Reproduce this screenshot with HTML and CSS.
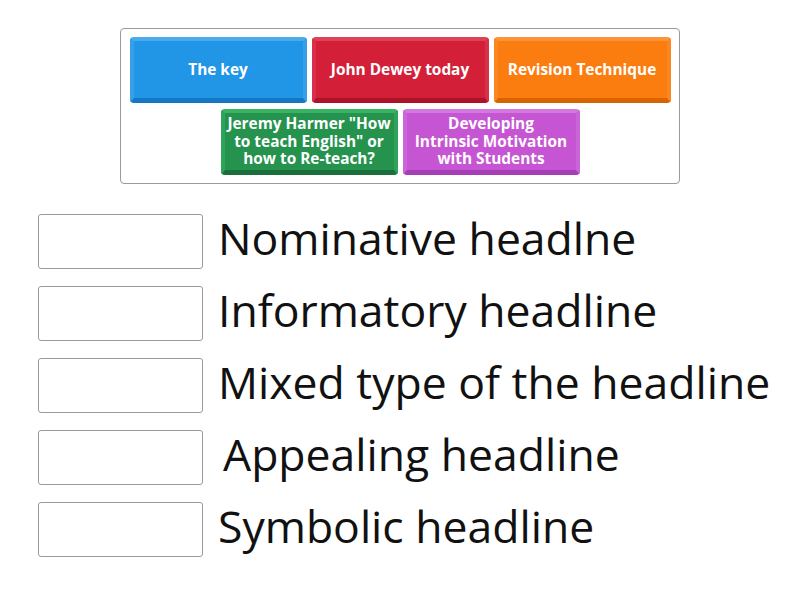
FILE: index.html
```html
<!DOCTYPE html>
<html lang="en">
<head>
    <meta charset="UTF-8">
    <title>Match up</title>
    <link rel="stylesheet" href="styles.css">
</head>
<body>
    <div class="tile-bank">
        <div class="tile blue">The key</div>
        <div class="tile red">John Dewey today</div>
        <div class="tile orange">Revision Technique</div>
        <div class="tile green">Jeremy Harmer "How to teach English" or how to Re-teach?</div>
        <div class="tile purple">Developing Intrinsic Motivation with Students</div>
    </div>

    <div class="targets">
        <div class="target-row">
            <div class="drop-box"></div>
            <div class="label">Nominative headlne</div>
        </div>
        <div class="target-row">
            <div class="drop-box"></div>
            <div class="label">Informatory headline</div>
        </div>
        <div class="target-row">
            <div class="drop-box"></div>
            <div class="label">Mixed type of the headline</div>
        </div>
        <div class="target-row">
            <div class="drop-box"></div>
            <div class="label indent">Appealing headline</div>
        </div>
        <div class="target-row">
            <div class="drop-box"></div>
            <div class="label">Symbolic headline</div>
        </div>
    </div>
</body>
</html>
```

FILE: styles.css
```css
* {
    margin: 0;
    padding: 0;
    box-sizing: border-box;
    font-family: "Open Sans", sans-serif;
}

body {
    background: #ffffff;
    color: #111;
}

.tile-bank {
    margin: 28px 0 0 120px;
    width: 560px;
    padding: 8px;
    border: 1px solid #9a9a9a;
    border-radius: 4px;
    display: flex;
    flex-wrap: wrap;
    justify-content: center;
    gap: 6px 5px;
}

.tile {
    width: 177px;
    height: 66px;
    padding: 0 1px;
    border-radius: 4px;
    border: 4px solid;
    border-bottom-width: 5px;
    display: flex;
    align-items: center;
    justify-content: center;
    text-align: center;
    text-wrap: balance;
    color: #fff;
    font-weight: bold;
    font-size: 15.4px;
    line-height: 1.14;
}

.blue {
    background: #2196e6;
    border-color: #4aabec #35a0e8 #1477c4;
}

.red {
    background: #d41f38;
    border-color: #de4257 #d83049 #ab1329;
}

.orange {
    background: #fb7d10;
    border-color: #fd9438 #fc8720 #d86400;
}

.green {
    background: #25924e;
    border-color: #37b464 #2ea35a #1a6e39;
}

.purple {
    background: #c655d4;
    border-color: #d479e0 #cd65da #a73db6;
}

.targets {
    margin-top: 30px;
    display: flex;
    flex-direction: column;
    gap: 17px;
}

.target-row {
    display: flex;
    align-items: flex-start;
    height: 55px;
}

.drop-box {
    margin-left: 38px;
    width: 165px;
    height: 55px;
    border: 1px solid #9a9a9a;
    border-radius: 3px;
}

.label {
    margin: 1.5px 0 0 15px;
    font-size: 44.5px;
    line-height: 1;
    color: #111;
    white-space: nowrap;
}

.label.indent {
    margin-left: 20px;
}
```
